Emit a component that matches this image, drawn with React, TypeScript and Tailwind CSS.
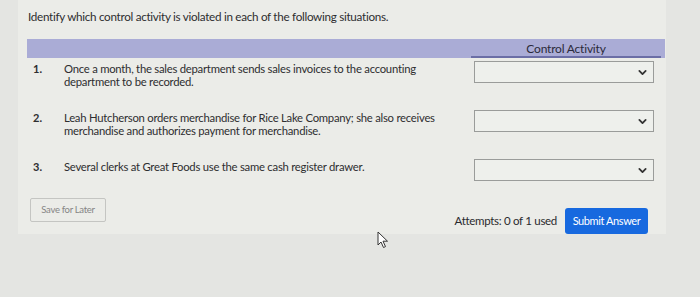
import React from 'react';

const rows = [
  {
    n: '1.',
    text: 'Once a month, the sales department sends sales invoices to the accounting department to be recorded.',
  },
  {
    n: '2.',
    text: 'Leah Hutcherson orders merchandise for Rice Lake Company; she also receives merchandise and authorizes payment for merchandise.',
  },
  {
    n: '3.',
    text: 'Several clerks at Great Foods use the same cash register drawer.',
  },
];

function Chevron() {
  return (
    <svg className="w-[9px] h-[9px]" viewBox="0 0 10 10" fill="none">
      <path d="M1.5 3.2 L5 6.7 L8.5 3.2" stroke="#333" strokeWidth={2} strokeLinecap="round" strokeLinejoin="round" />
    </svg>
  );
}

export default function App() {
  return (
    <div
      className="relative w-[700px] h-[297px] bg-[#e4e5e2] overflow-hidden text-[#2e2e30]"
      style={{ fontFamily: 'Lato, "Open Sans", sans-serif' }}
    >
      <div className="ml-[18px] w-[648px] h-[234px] bg-[#ebece8] pt-[8px]">
        {/* Title */}
        <p className="pl-[10px] text-[11.7px] leading-[16px] tracking-[-0.3px]">
          Identify which control activity is violated in each of the following situations.
        </p>

        {/* Header bar */}
        <div className="mt-[15px] ml-[9px] w-[638px] h-[19px] bg-[#aaacd6] flex justify-end">
          <div className="w-[190px] mr-[4px] border-b-2 border-[#6b6ea6] flex items-end justify-center">
            <span className="text-[12px] leading-[14px] tracking-[-0.2px] text-[#2a2a3a]">Control Activity</span>
          </div>
        </div>

        {/* Questions */}
        <div className="mt-[3px] flex flex-col gap-[27px]">
          {rows.map((r) => (
            <div key={r.n} className="h-[22px] flex items-start">
              <span className="w-[46px] pl-[15px] pt-[1px] text-[11px] leading-[13px] font-bold">{r.n}</span>
              <p className="w-[400px] pt-[1px] text-[11.3px] leading-[13px] tracking-[-0.25px]">{r.text}</p>
              <div className="ml-[10px] w-[180px] h-[22px] bg-[#eef0ec] border border-[#9a9c9a] flex items-center justify-end pr-[6px]">
                <Chevron />
              </div>
            </div>
          ))}
        </div>

        {/* Footer */}
        <div className="mt-[17px] flex items-start pl-[12px] pr-[18px]">
          <button className="w-[76px] h-[24px] border border-[#c4c5c2] rounded-[2px] text-[9.5px] text-[#858585] tracking-[-0.3px]">
            Save for Later
          </button>
          <div className="ml-auto mt-[10px] flex items-center gap-[8px]">
            <span className="text-[11.5px] tracking-[-0.3px] text-[#2a2a2e]">Attempts: 0 of 1 used</span>
            <button className="w-[83px] h-[26px] bg-[#1769df] rounded-[3px] text-white text-[11px] tracking-[-0.4px]">
              Submit Answer
            </button>
          </div>
        </div>
      </div>

      {/* Mouse pointer */}
      <svg className="absolute left-[377px] top-[231px] w-[12px] h-[18px]" viewBox="0 0 12 18">
        <path d="M1 1 L1 14 L4 11 L6.5 16.5 L8.5 15.6 L6 10.2 L10.5 10.2 Z" fill="#fff" stroke="#333" strokeWidth={1} strokeLinejoin="round" />
      </svg>
    </div>
  );
}
